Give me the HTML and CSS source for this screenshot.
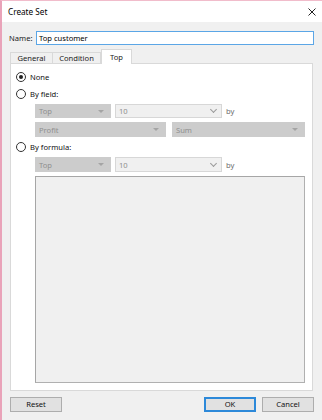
FILE: index.html
```html
<!DOCTYPE html>
<html lang="en">
<head>
  <meta charset="utf-8">
  <title>Create Set</title>
  <link rel="stylesheet" href="styles.css">
</head>
<body>
  <div class="window">
    <div class="titlebar">
      <span class="title">Create Set</span>
      <svg class="close" width="8" height="8" viewBox="0 0 8 8">
        <path d="M0.5 0.5 L7.5 7.5 M7.5 0.5 L0.5 7.5" stroke="#222" stroke-width="1" fill="none"/>
      </svg>
    </div>

    <div class="content">
      <div class="name-row">
        <label>Name:</label>
        <div class="name-input">Top customer</div>
      </div>

      <div class="tabs">
        <div class="tab tab-general">General</div>
        <div class="tab tab-condition">Condition</div>
        <div class="tab tab-top active">Top</div>
      </div>

      <div class="panel">
        <div class="opt opt-none">
          <span class="radio checked"></span>None
        </div>
        <div class="opt opt-field">
          <span class="radio"></span>By field:
        </div>
        <div class="row row-1">
          <div class="combo disabled w-top">Top<span class="arrow"></span></div>
          <div class="combo editable w-count">10<span class="chev"></span></div>
          <span class="by">by</span>
        </div>
        <div class="row row-2">
          <div class="combo disabled w-field">Profit<span class="arrow"></span></div>
          <div class="combo disabled w-agg">Sum<span class="arrow"></span></div>
        </div>
        <div class="opt opt-formula">
          <span class="radio"></span>By formula:
        </div>
        <div class="row row-3">
          <div class="combo disabled w-top">Top<span class="arrow"></span></div>
          <div class="combo editable w-count">10<span class="chev"></span></div>
          <span class="by">by</span>
        </div>
        <div class="formula-box"></div>
      </div>

      <div class="footer">
        <div class="btn">Reset</div>
        <div class="btn-group">
          <div class="btn primary">OK</div>
          <div class="btn">Cancel</div>
        </div>
      </div>
    </div>
  </div>
</body>
</html>
```

FILE: styles.css
```css
html, body {
  margin: 0;
  padding: 0;
}

body {
  font-family: "Noto Sans", "Open Sans", sans-serif;
  font-size: 7.6px;
  color: #000;
  background: #f0f0f0;
}

.window {
  width: 322px;
  height: 420px;
  box-sizing: border-box;
  border-left: 2px solid #e9a3b9;
  border-top: 1px solid #f1bccb;
  background: #f0f0f0;
  display: flex;
  flex-direction: column;
  overflow: hidden;
}

.titlebar {
  height: 21px;
  flex: none;
  background: #fff;
  display: flex;
  align-items: center;
  justify-content: space-between;
  padding: 0 6px 0 6px;
}

.title {
  font-size: 8.2px;
  color: #000;
}

.content {
  padding: 0 9px 0 8px;
  display: flex;
  flex-direction: column;
}

.name-row {
  margin-top: 9px;
  height: 14px;
  display: flex;
  align-items: center;
  margin-left: -1px;
  margin-right: -1px;
}

.name-row label {
  width: 27px;
  color: #222;
}

.name-input {
  flex: 1;
  height: 14px;
  box-sizing: border-box;
  border: 1px solid #5ba6e6;
  background: #fff;
  padding-left: 2px;
  line-height: 12px;
  color: #000;
}

/* tabs */

.tabs {
  margin-top: 4px;
  height: 14px;
  display: flex;
  align-items: flex-end;
  position: relative;
  z-index: 1;
}

.tab {
  height: 11px;
  box-sizing: border-box;
  border: 1px solid #d9d9d9;
  border-bottom: none;
  background: #f0f0f0;
  text-align: center;
  line-height: 10px;
  color: #222;
}

.tab-general { width: 43px; }
.tab-condition { width: 48px; border-left: none; }

.tab.active {
  width: 31px;
  height: 15px;
  margin-bottom: -1px;
  background: #fff;
  line-height: 14px;
}

.panel {
  height: 328px;
  box-sizing: border-box;
  border: 1px solid #d9d9d9;
  background: #fff;
  padding: 0 7px 0 24px;
  display: flex;
  flex-direction: column;
}

.opt {
  height: 12px;
  display: flex;
  align-items: center;
  margin-left: -19px;
  color: #111;
}

.opt-none { margin-top: 7px; }
.opt-field { margin-top: 5px; }
.opt-formula { margin-top: 4px; }

.radio {
  width: 10px;
  height: 10px;
  box-sizing: border-box;
  border: 1px solid #333;
  border-radius: 50%;
  background: #fff;
  margin-right: 4px;
  display: flex;
  align-items: center;
  justify-content: center;
}

.radio.checked::after {
  content: "";
  width: 4px;
  height: 4px;
  border-radius: 50%;
  background: #222;
}

.row {
  display: flex;
  align-items: center;
  height: 14px;
}

.row-1 { margin-top: 4px; }
.row-2 { margin-top: 4px; height: 15px; }
.row-3 { margin-top: 4px; height: 15px; }

.combo {
  height: 100%;
  box-sizing: border-box;
  padding-left: 3px;
  display: flex;
  align-items: center;
  justify-content: space-between;
  color: #8f8f8f;
}

.combo.disabled {
  background: #cccccc;
  border: 1px solid #cccccc;
}

.combo.editable {
  background: #f0f0f0;
  border: 1px solid #d7d7d7;
}

.w-top { width: 76px; margin-right: 4px; }
.w-count { width: 107px; margin-right: 4px; }
.w-field { width: 131px; margin-right: 6px; }
.w-agg { width: 133px; }

.arrow {
  width: 0;
  height: 0;
  border-left: 3px solid transparent;
  border-right: 3px solid transparent;
  border-top: 3px solid #a4a4a4;
  margin-right: 6px;
}

.chev {
  width: 4px;
  height: 4px;
  border-right: 1px solid #9a9a9a;
  border-bottom: 1px solid #9a9a9a;
  transform: rotate(45deg);
  margin: 0 5px 3px 0;
}

.by {
  color: #6f6f6f;
}

.formula-box {
  margin-top: 4px;
  width: 270px;
  height: 207px;
  box-sizing: border-box;
  background: #f0f0f0;
  border: 1px solid #b0b0b0;
  border-top-color: #a6a6a6;
  border-left-color: #a6a6a6;
}

/* buttons */

.footer {
  margin-top: 6px;
  margin-right: -1px;
  display: flex;
  justify-content: space-between;
}

.btn-group {
  display: flex;
  gap: 6px;
}

.btn {
  width: 52px;
  height: 15px;
  box-sizing: border-box;
  border: 1px solid #adadad;
  background: #e1e1e1;
  text-align: center;
  line-height: 13px;
  color: #111;
}

.btn.primary {
  border: 1px solid #2d89d9;
  box-shadow: inset 0 0 0 1px #2d89d9;
}
```
